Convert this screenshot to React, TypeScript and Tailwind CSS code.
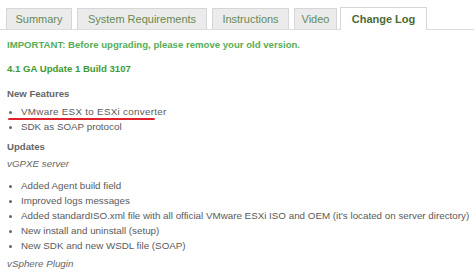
const tabs = [
  { label: 'Summary', w: 'w-[66px]' },
  { label: 'System Requirements', w: 'w-[130px]' },
  { label: 'Instructions', w: 'w-[77px]' },
  { label: 'Video', w: 'w-[43px]' },
];

const Bullet = ({ children }: { children: React.ReactNode }) => (
  <li className="flex items-center h-[15px] whitespace-nowrap">
    <span className="w-[3px] h-[3px] bg-[#666] rounded-full ml-[9px] mr-[9px] shrink-0" />
    <span>{children}</span>
  </li>
);

export default function App() {
  return (
    <div className="w-[474px] h-[273px] bg-white overflow-hidden font-['Liberation_Sans',Arial,sans-serif] text-[9.8px] text-[#5a5a5a]">
      {/* Tabs */}
      <div className="flex items-end gap-[5px] pl-[6px] border-b border-[#dcdcdc] h-[30px]">
        {tabs.map((t) => (
          <div
            key={t.label}
            className={`${t.w} h-[21px] flex items-center justify-center bg-[#ebebeb] border border-b-0 border-[#d6d6d6] text-[11px] text-[#668a52] whitespace-nowrap`}
          >
            {t.label}
          </div>
        ))}
        <div className="w-[87px] h-[23px] -ml-[2px] -mb-px flex items-center justify-center bg-white border border-b-0 border-[#d6d6d6] text-[11px] font-bold text-[#4a6b35] whitespace-nowrap">
          Change Log
        </div>
      </div>

      <div className="pl-[7px] whitespace-nowrap">
        <p className="mt-[8px] font-bold text-[9.6px] text-[#56ad56] leading-[14px]">
          IMPORTANT: Before upgrading, please remove your old version.
        </p>
        <p className="mt-[10px] font-bold text-[9.6px] text-[#3d9a36] leading-[14px]">4.1 GA Update 1 Build 3107</p>

        <p className="mt-[11px] font-bold text-[9.6px] text-[#666] leading-[14px]">New Features</p>
        <ul className="mt-[4px] -ml-[7px]">
          <li className="relative flex items-center h-[15px]">
            <span className="w-[3px] h-[3px] bg-[#666] rounded-full ml-[9px] mr-[9px] shrink-0" />
            <span className="tracking-[0.3px]">VMware ESX to ESXi converter</span>
            <span className="absolute left-[8px] top-[13px] w-[147px] h-[2px] bg-[#e0202a] rounded-full" />
          </li>
          <Bullet>SDK as SOAP protocol</Bullet>
        </ul>

        <p className="mt-[5px] font-bold text-[9.6px] text-[#666] leading-[14px]">Updates</p>
        <p className="mt-[3px] italic text-[#666] leading-[14px]">vGPXE server</p>
        <ul className="mt-[8px] -ml-[7px]">
          <Bullet>Added Agent build field</Bullet>
          <Bullet>Improved logs messages</Bullet>
          <Bullet>Added standardISO.xml file with all official VMware ESXi ISO and OEM (it's located on server directory)</Bullet>
          <Bullet>New install and uninstall (setup)</Bullet>
          <Bullet>New SDK and new WSDL file (SOAP)</Bullet>
        </ul>
        <p className="mt-[3px] italic text-[#666] leading-[14px]">vSphere Plugin</p>
      </div>
    </div>
  );
}
